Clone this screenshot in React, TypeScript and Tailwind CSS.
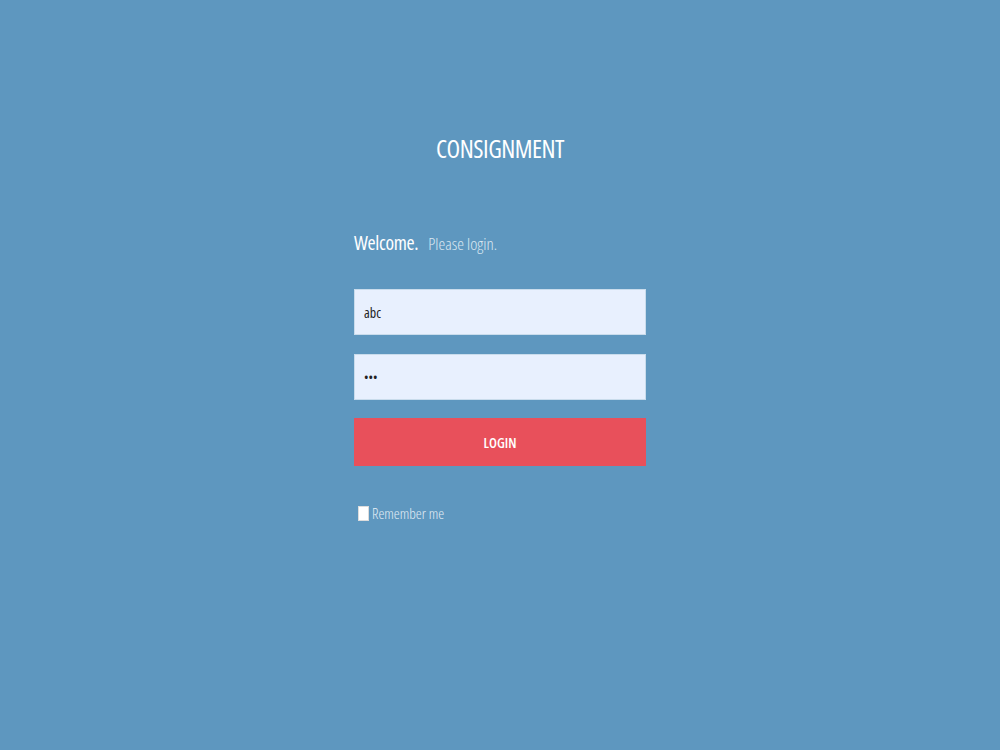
import { useState } from 'react'

export default function App() {
  const [user, setUser] = useState('abc')
  const [pass, setPass] = useState('abc')
  const [remember, setRemember] = useState(false)

  return (
    <div className="min-h-[750px] w-full bg-[#5e97bf] font-['Open_Sans','Liberation_Sans',sans-serif] font-stretch-condensed text-white">
      <div className="mx-auto flex w-[292px] flex-col pt-[131px]">
        <h1 className="text-center text-[25px] leading-[35px] font-normal tracking-[-0.5px]">CONSIGNMENT</h1>

        <div className="mt-[62px] flex items-baseline gap-[10px]">
          <span className="text-[19.5px] font-medium tracking-[-0.3px]">Welcome.</span>
          <span className="text-[17px] font-light text-[#dbe7f1]">Please login.</span>
        </div>

        <form className="mt-[32px] flex flex-col" onSubmit={e => e.preventDefault()}>
          <input
            value={user}
            onChange={e => setUser(e.target.value)}
            className="h-[46px] w-full border border-[#c9dcec] bg-[#e8f0fe] px-[9px] text-[14px] text-[#222] outline-none"
          />
          <input
            type="password"
            value={pass}
            onChange={e => setPass(e.target.value)}
            className="mt-[19px] h-[46px] w-full border border-[#c9dcec] bg-[#e8f0fe] px-[9px] text-[12px] text-[#222] outline-none"
          />
          <button type="submit" className="mt-[18px] h-[48px] w-full bg-[#e8505b] text-[14px] font-semibold text-white">
            LOGIN
          </button>
        </form>

        <label className="mt-[36px] flex items-center gap-[3px] pl-[4px] text-[15px] font-light text-[#e4eef6]">
          <input
            type="checkbox"
            checked={remember}
            onChange={e => setRemember(e.target.checked)}
            className="h-[15px] w-[11px] appearance-none border border-[#dcdcdc] bg-white"
          />
          Remember me
        </label>
      </div>
    </div>
  )
}
